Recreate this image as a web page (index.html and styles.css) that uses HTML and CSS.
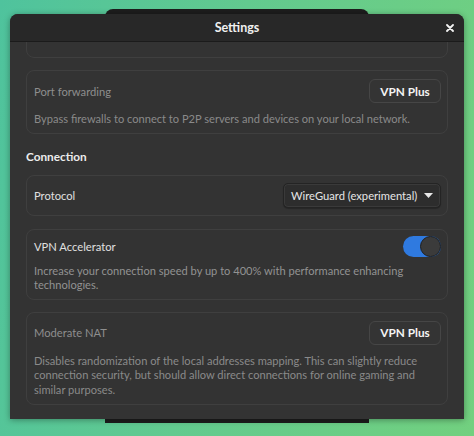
FILE: index.html
```html
<!DOCTYPE html>
<html>
<head>
<meta charset="utf-8">
<link rel="stylesheet" href="styles.css">
</head>
<body>
<div class="desktop">
  <div class="back-window"></div>
  <div class="window">
    <div class="header">
      <span class="title">Settings</span>
      <span class="close">
        <svg width="8" height="8" viewBox="0 0 8 8"><path d="M1 1 L7 7 M7 1 L1 7" stroke="#f2f2f2" stroke-width="1.8" stroke-linecap="round"/></svg>
      </span>
    </div>
    <div class="content">
      <div class="card card-cut"></div>

      <div class="card">
        <div class="row row-btn">
          <span class="label disabled">Port forwarding</span>
          <span class="btn">VPN Plus</span>
        </div>
        <p class="desc dim">Bypass firewalls to connect to P2P servers and devices on your local network.</p>
      </div>

      <h2 class="section">Connection</h2>

      <div class="card card-proto">
        <div class="row row-drop">
          <span class="label">Protocol</span>
          <span class="dropdown">WireGuard (experimental)
            <svg width="9" height="5" viewBox="0 0 9 5"><path d="M0 0 H9 L4.5 5 Z" fill="#e8e8e8"/></svg>
          </span>
        </div>
      </div>

      <div class="card card-toggle">
        <div class="row row-toggle">
          <span class="label">VPN Accelerator</span>
          <span class="switch"><span class="knob"></span></span>
        </div>
        <p class="desc desc-toggle">Increase your connection speed by up to 400% with performance enhancing technologies.</p>
      </div>

      <div class="card card-last">
        <div class="row row-btn">
          <span class="label disabled">Moderate NAT</span>
          <span class="btn">VPN Plus</span>
        </div>
        <p class="desc dim">Disables randomization of the local addresses mapping. This can slightly reduce connection security, but should allow direct connections for online gaming and similar purposes.</p>
      </div>
    </div>
  </div>
</div>
</body>
</html>
```
FILE: styles.css
```css
html, body {
  margin: 0;
  padding: 0;
}
body {
  width: 474px;
  height: 436px;
  overflow: hidden;
  font-family: Lato, "Noto Sans", sans-serif;
}
.desktop {
  position: relative;
  width: 474px;
  height: 436px;
  background: linear-gradient(100deg, #4fc39d 0%, #62ca8f 45%, #72d07f 100%);
}
.back-window {
  position: absolute;
  left: 105px;
  top: 9px;
  width: 264px;
  height: 414px;
  background: #1d1d1d;
  border-radius: 8px 8px 0 0;
}
.window {
  position: absolute;
  left: 10px;
  top: 14px;
  width: 454px;
  height: 405px;
  background: #333333;
  border-radius: 8px 8px 0 0;
  box-shadow: 0 1px 6px rgba(0, 0, 0, 0.35);
  display: flex;
  flex-direction: column;
  overflow: hidden;
}
.header {
  height: 27px;
  flex: none;
  background: #282828;
  border-bottom: 1px solid #1b1b1b;
  display: flex;
  align-items: center;
  justify-content: center;
  position: relative;
}
.title {
  color: #f0f0f0;
  font-weight: bold;
  font-size: 12.5px;
}
.close {
  position: absolute;
  right: 10px;
  top: 10px;
  width: 8px;
  height: 8px;
  display: flex;
}
.content {
  flex: 1;
  overflow: hidden;
  padding: 0 16px;
  display: flex;
  flex-direction: column;
}
.card {
  border: 1px solid #3f3f3f;
  border-radius: 8px;
  padding: 8px 6px 6px 7px;
  margin-bottom: 12px;
  flex: none;
}
.card-cut {
  margin-top: -20px;
  height: 34px;
  padding: 0;
}
.card-proto {
  padding: 7px 6px 7px 7px;
  margin-bottom: 13px;
}
.card-toggle {
  padding-top: 6px;
}
.card-last {
  padding-bottom: 7px;
}
.row {
  display: flex;
  align-items: center;
  justify-content: space-between;
}
.row-btn { height: 24px; }
.row-drop { height: 25px; }
.row-toggle { height: 21px; }
.label {
  font-size: 11.2px;
  color: #e0e0e0;
}
.label.disabled {
  color: #8e8e8e;
}
.btn {
  height: 22px;
  width: 70px;
  justify-content: center;
  border: 1px solid #464646;
  border-radius: 6px;
  background: #343434;
  color: #f4f4f4;
  font-weight: bold;
  font-size: 11.8px;
  display: flex;
  align-items: center;
}
.dropdown {
  height: 23px;
  width: 142px;
  padding: 0 7px;
  justify-content: space-between;
  white-space: nowrap;
  border: 1px solid #242424;
  border-radius: 5px;
  background: #2d2d2d;
  box-shadow: inset 0 0 0 1px #3a3a3a, 0 1px 1px rgba(0,0,0,0.25);
  color: #e6e6e6;
  font-size: 11.2px;
  display: flex;
  align-items: center;
}
.switch {
  width: 38px;
  height: 21px;
  border-radius: 11px;
  background: #2f7ae0;
  display: flex;
  justify-content: flex-end;
  align-items: center;
}
.knob {
  width: 19px;
  height: 19px;
  border-radius: 50%;
  background: #3b3b3b;
  border: 1px solid #1f1f1f;
}
.desc {
  margin: 9px 0 0 0;
  font-size: 11.1px;
  line-height: 14.5px;
  color: #929292;
}
.desc.dim {
  color: #8a8a8a;
}
.desc-toggle {
  margin-top: 7px;
}
.section {
  margin: 4px 0 11px 0;
  font-size: 11.8px;
  line-height: 14px;
  font-weight: bold;
  color: #ececec;
}
```
